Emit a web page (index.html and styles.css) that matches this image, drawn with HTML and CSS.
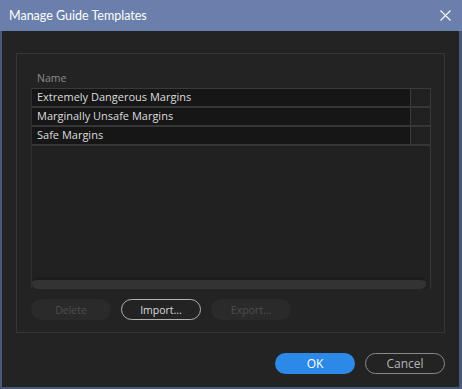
FILE: index.html
```html
<!DOCTYPE html>
<html>
<head>
<meta charset="utf-8">
<link rel="stylesheet" href="styles.css">
</head>
<body>
<div class="window">
  <div class="titlebar">
    <span class="title">Manage Guide Templates</span>
    <svg class="close" width="11" height="11" viewBox="0 0 11 11"><path d="M0.5 0.5 L10.5 10.5 M10.5 0.5 L0.5 10.5" stroke="#ffffff" stroke-width="1.1" fill="none"/></svg>
  </div>
  <div class="body">
    <div class="group">
      <div class="colhead">Name</div>
      <div class="list">
        <div class="row"><div class="cell">Extremely Dangerous Margins</div><div class="extra"></div></div>
        <div class="row"><div class="cell">Marginally Unsafe Margins</div><div class="extra"></div></div>
        <div class="row"><div class="cell">Safe Margins</div><div class="extra"></div></div>
        <div class="spacer"></div>
        <div class="scrollbar"></div>
      </div>
      <div class="btnrow">
        <div class="btn disabled">Delete</div>
        <div class="btn outline">Import...</div>
        <div class="btn disabled">Export...</div>
      </div>
    </div>
    <div class="footer">
      <div class="btn primary">OK</div>
      <div class="btn outline cancel">Cancel</div>
    </div>
  </div>
</div>
</body>
</html>
```

FILE: styles.css
```css
* { box-sizing: border-box; }
html, body { margin: 0; padding: 0; }
body { width: 462px; height: 389px; overflow: hidden; background: #232323; font-family: "Open Sans", "Noto Sans", sans-serif; }
.window {
  width: 462px; height: 389px;
  background: #232323;
  border-left: 2px solid #48577a;
  border-right: 3px solid #48577a;
  border-bottom: 2px solid #48577a;
  display: flex; flex-direction: column;
}
.titlebar {
  height: 31px;
  margin: 0 -3px 0 -2px;
  background: #6a7fab;
  display: flex; align-items: center; justify-content: space-between;
  padding: 0 11px 0 9px;
}
.title { color: #ffffff; font-family: "Lato", "Noto Sans", sans-serif; font-size: 12.5px; }
.close { display: block; }
.body { flex: 1; padding: 22px 14px 0 14px; display: flex; flex-direction: column; }
.group {
  border: 1px solid #363636;
  height: 280px;
  padding: 16px 13px 0 14px;
  display: flex; flex-direction: column;
}
.colhead { color: #8c8c8c; font-size: 10.5px; height: 18px; line-height: 14px; padding-left: 6px; padding-top: 1px; }
.list {
  height: 201px;
  border-top: 1px solid #3a3a3a;
  border-left: 1px solid #2e2e2e;
  border-right: 1px solid #383838;
  background: #212121;
  display: flex; flex-direction: column;
}
.row { display: flex; height: 19px; border-bottom: 2px solid #363636; }
.cell { width: 379px; background: #161616; color: #dcdcdc; font-size: 11px; line-height: 16px; padding-left: 5px; border-right: 1px solid #3a3a3a; white-space: nowrap; }
.extra { flex: 1; }
.spacer { flex: 1; }
.scrollbar { height: 12px; margin: 0 4px 0 0; background: #333333; border-radius: 5px; border-top: 3px solid #1c1c1c; background-clip: padding-box; }
.btnrow { display: flex; gap: 10px; margin-top: 10px; }
.btn {
  width: 80px; height: 21px; border-radius: 11px;
  display: flex; align-items: center; justify-content: center;
  font-size: 10.5px;
}
.disabled { background: #2a2a2a; color: #4e4e4e; }
.outline { border: 1.5px solid #b2b2b2; color: #dadada; }
.footer { display: flex; justify-content: flex-end; gap: 10px; margin-top: 20px; }
.primary { background: #2c89e8; color: #ffffff; font-size: 12px; }
.cancel { border-color: #8a8a8a; color: #b4b4b4; font-size: 12px; }
```
